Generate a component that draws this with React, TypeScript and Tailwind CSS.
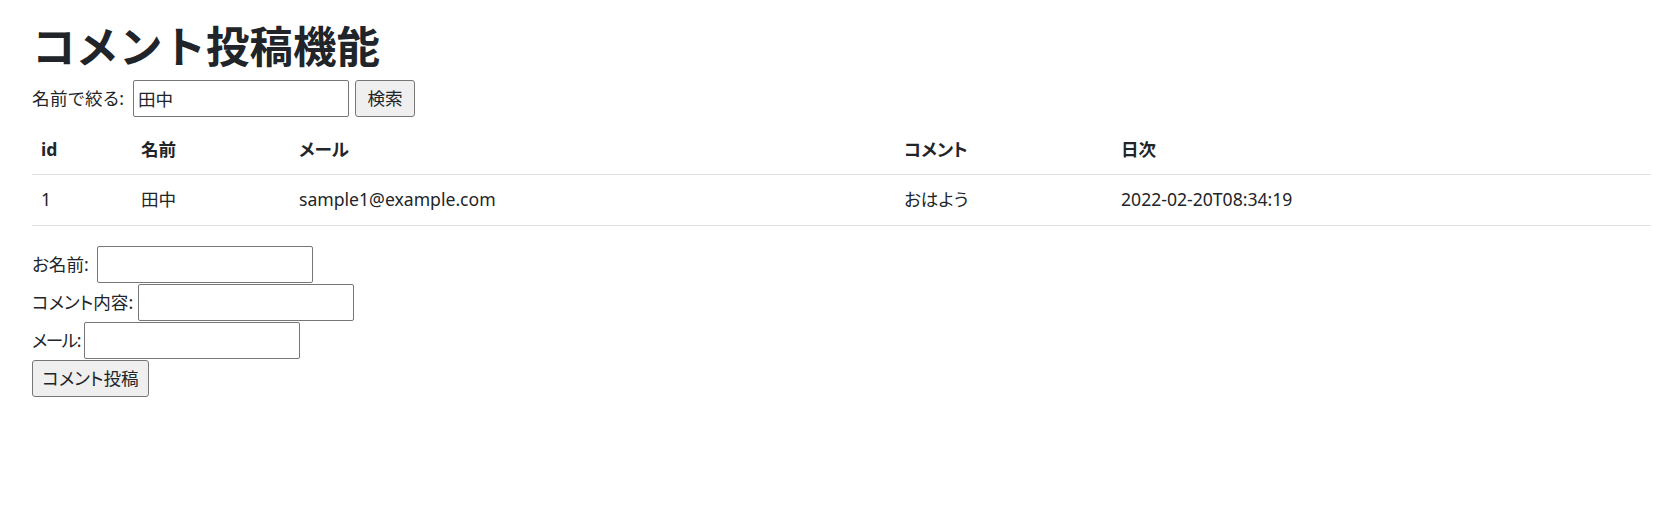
import * as React from "react"

const rows = [
  { id: 1, name: "田中", mail: "sample1@example.com", comment: "おはよう", date: "2022-02-20T08:34:19" },
]

const inputCls =
  "h-[37px] w-[216px] rounded-[2px] border border-[#767676] bg-white px-[4px] text-[17.6px] text-[#212529] outline-none"

export default function App() {
  const [keyword, setKeyword] = React.useState("田中")

  return (
    <div className="min-h-[508px] bg-white pl-[32px] pr-[24px] font-['Noto_Sans','Noto_Sans_CJK_JP',sans-serif] text-[17.6px] text-[#212529] [font-feature-settings:'palt']">
      <h1 className="pt-[20px] text-[43.5px] font-bold leading-[52px] [font-feature-settings:normal]">コメント投稿機能</h1>

      <div className="mt-[8px] flex h-[37px] items-center">
        <label htmlFor="search" className="w-[97px] whitespace-nowrap tracking-[0.5px]">名前で絞る:</label>
        <input id="search" className={`${inputCls} ml-[4px]`} value={keyword} onChange={(e) => setKeyword(e.target.value)} />
        <button className="ml-[6px] h-[37px] w-[60px] rounded-[3px] border border-[#767676] bg-[#efefef]">検索</button>
      </div>

      <table className="mt-[7px] w-full table-fixed border-collapse text-left">
        <colgroup>
          <col className="w-[100px]" />
          <col className="w-[158px]" />
          <col className="w-[605px]" />
          <col className="w-[217px]" />
          <col />
        </colgroup>
        <thead>
          <tr className="h-[50px] border-b border-[#dee2e6]">
            <th className="px-[9px] font-bold">id</th>
            <th className="px-[9px] font-bold">名前</th>
            <th className="px-[9px] font-bold">メール</th>
            <th className="px-[9px] font-bold">コメント</th>
            <th className="px-[9px] font-bold">日次</th>
          </tr>
        </thead>
        <tbody>
          {rows.map((r) => (
            <tr key={r.id} className="h-[51px] border-b border-[#dee2e6]">
              <td className="px-[9px]">{r.id}</td>
              <td className="px-[9px]">{r.name}</td>
              <td className="px-[9px]">{r.mail}</td>
              <td className="px-[9px]">{r.comment}</td>
              <td className="px-[9px]">{r.date}</td>
            </tr>
          ))}
        </tbody>
      </table>

      <form className="mt-[20px] flex flex-col items-start gap-[1px]" onSubmit={(e) => e.preventDefault()}>
        <div className="flex h-[37px] items-center">
          <label htmlFor="name" className="w-[61px] whitespace-nowrap">お名前:</label>
          <input id="name" className={`${inputCls} ml-[4px]`} />
        </div>
        <div className="flex h-[37px] items-center">
          <label htmlFor="comment" className="w-[102px] whitespace-nowrap">コメント内容:</label>
          <input id="comment" className={`${inputCls} ml-[4px]`} />
        </div>
        <div className="flex h-[37px] items-center">
          <label htmlFor="mail" className="w-[49px] whitespace-nowrap tracking-[-1.5px]">メール:</label>
          <input id="mail" className={`${inputCls} ml-[3px]`} />
        </div>
        <button type="submit" className="h-[37px] w-[117px] rounded-[3px] border border-[#767676] bg-[#efefef]">
          コメント投稿
        </button>
      </form>
    </div>
  )
}
